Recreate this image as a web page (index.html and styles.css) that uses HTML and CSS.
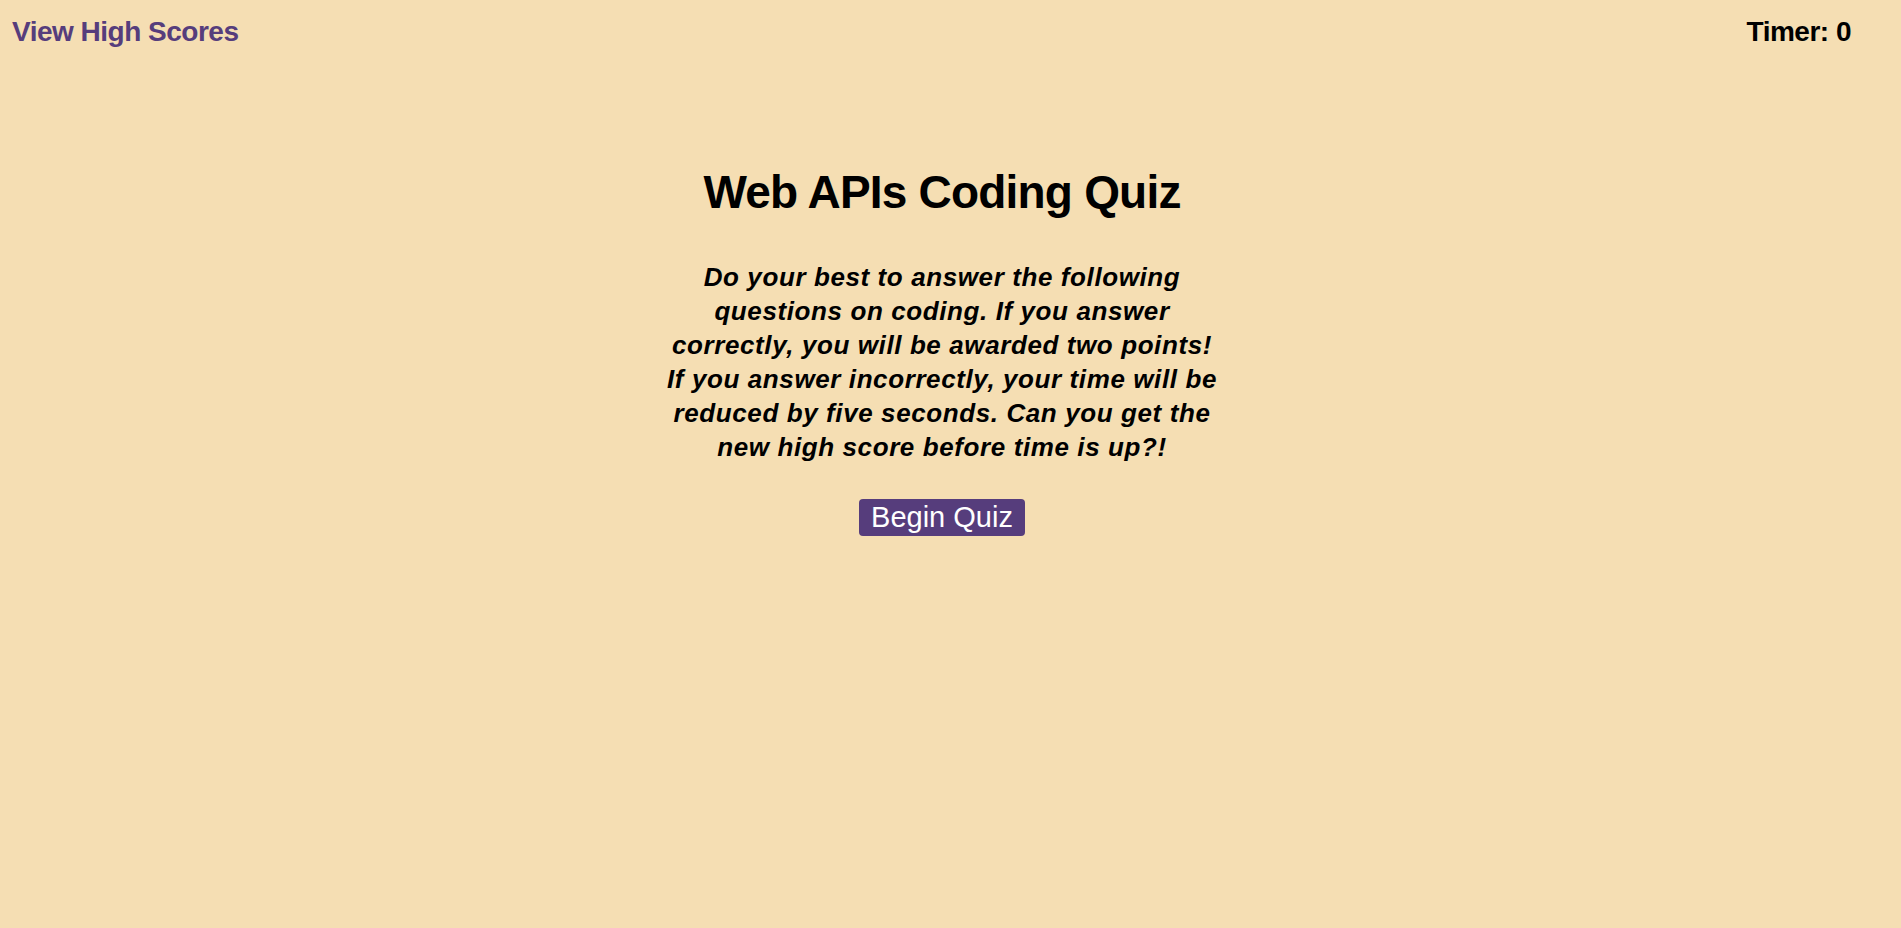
FILE: index.html
```html
<!DOCTYPE html>
<html lang="en">
<head>
<meta charset="utf-8">
<title>Web APIs Coding Quiz</title>
<link rel="stylesheet" href="styles.css">
</head>
<body>
<header class="topbar">
  <a class="scores-link" href="#">View High Scores</a>
  <div class="timer">Timer: 0</div>
</header>
<main class="stage">
  <section class="intro">
    <h1 class="title">Web APIs Coding Quiz</h1>
    <p class="lead">Do your best to answer the following questions on coding. If you answer correctly, you will be awarded two points! If you answer incorrectly, your time will be reduced by five seconds. Can you get the new high score before time is up?!</p>
    <button class="start-btn" type="button">Begin Quiz</button>
  </section>
</main>
</body>
</html>
```
FILE: styles.css
```css
html, body {
  margin: 0;
  padding: 0;
}

body {
  background: #f5deb3;
  color: #000;
  font-family: "Liberation Sans", Arial, sans-serif;
  min-height: 928px;
}

.topbar {
  display: flex;
  justify-content: space-between;
  align-items: flex-start;
  padding: 16px 50px 0 12px;
  font-size: 28px;
  font-weight: 700;
  line-height: 32px;
  letter-spacing: -0.5px;
}

.scores-link {
  color: #563d7c;
  text-decoration: none;
}

.timer {
  color: #000;
}

.stage {
  padding-right: 17px;
}

.intro {
  width: 558px;
  margin: 116px auto 0;
  display: flex;
  flex-direction: column;
  align-items: center;
  text-align: center;
}

.title {
  margin: 0;
  font-size: 46px;
  font-weight: 700;
  line-height: 56px;
  letter-spacing: -0.8px;
}

.lead {
  margin: 40px 0 0;
  font-size: 26px;
  font-weight: 700;
  font-style: italic;
  line-height: 34px;
  letter-spacing: 0.6px;
}

.start-btn {
  margin-top: 35px;
  padding: 2px 12px;
  border: none;
  border-radius: 4px;
  background: #563d7c;
  color: #fff;
  font-family: "Liberation Sans", Arial, sans-serif;
  font-size: 29px;
  line-height: 33px;
  cursor: pointer;
}
```
